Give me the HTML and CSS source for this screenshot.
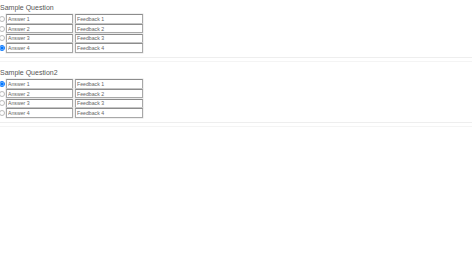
FILE: index.html
```html
<!DOCTYPE html>
<html>
<head>
<meta charset="utf-8">
<link rel="stylesheet" href="styles.css">
</head>
<body>
<div class="question">
  <div class="title">Sample Question</div>
  <div class="answers">
    <div class="row"><input type="radio" name="q1" class="radio"><input class="field" value="Answer 1"><input class="field" value="Feedback 1"></div>
    <div class="row"><input type="radio" name="q1" class="radio"><input class="field" value="Answer 2"><input class="field" value="Feedback 2"></div>
    <div class="row"><input type="radio" name="q1" class="radio"><input class="field" value="Answer 3"><input class="field" value="Feedback 3"></div>
    <div class="row"><input type="radio" name="q1" class="radio" checked><input class="field" value="Answer 4"><input class="field" value="Feedback 4"></div>
  </div>
</div>
<div class="sep"></div>
<div class="question">
  <div class="title">Sample Question2</div>
  <div class="answers">
    <div class="row"><input type="radio" name="q2" class="radio" checked><input class="field" value="Answer 1"><input class="field" value="Feedback 1"></div>
    <div class="row"><input type="radio" name="q2" class="radio"><input class="field" value="Answer 2"><input class="field" value="Feedback 2"></div>
    <div class="row"><input type="radio" name="q2" class="radio"><input class="field" value="Answer 3"><input class="field" value="Feedback 3"></div>
    <div class="row"><input type="radio" name="q2" class="radio"><input class="field" value="Answer 4"><input class="field" value="Feedback 4"></div>
  </div>
</div>
<div class="sep"></div>
</body>
</html>
```
FILE: styles.css
```css
html, body {
  margin: 0;
  padding: 0;
  background: #fff;
  font-family: "Liberation Sans", Arial, sans-serif;
  color: #555;
}
body {
  width: 472px;
  overflow: hidden;
}
.question {
  padding-top: 3px;
}
.title {
  font-size: 7px;
  line-height: 9px;
  height: 9px;
  margin-bottom: 2px;
}
.answers {
  display: flex;
  flex-direction: column;
}
.row {
  display: flex;
  align-items: center;
  height: 9.75px;
}
.radio {
  width: 6px;
  height: 6px;
  margin: 0 1px 0 -1px;
  padding: 0;
  opacity: 0.5;
}
.radio:checked {
  opacity: 1;
}
.field {
  box-sizing: border-box;
  width: 67px;
  height: 9.5px;
  margin: 0 2px 0 0;
  padding: 0 1px;
  border: 1px solid #a8a8a8;
  border-top-color: #8c8c8c;
  box-shadow: 0 0 0 0.5px #e2e2e2;
  font-family: "Liberation Sans", Arial, sans-serif;
  font-size: 5.2px;
  color: #666;
  background: #fff;
  outline: none;
}
.field + .field {
  width: 68px;
}
.sep {
  margin-top: 4px;
  height: 5px;
  border-top: 1px solid #eeeeee;
  border-bottom: 1px solid #f4f4f4;
  box-sizing: border-box;
  margin-bottom: 3px;
}
```
